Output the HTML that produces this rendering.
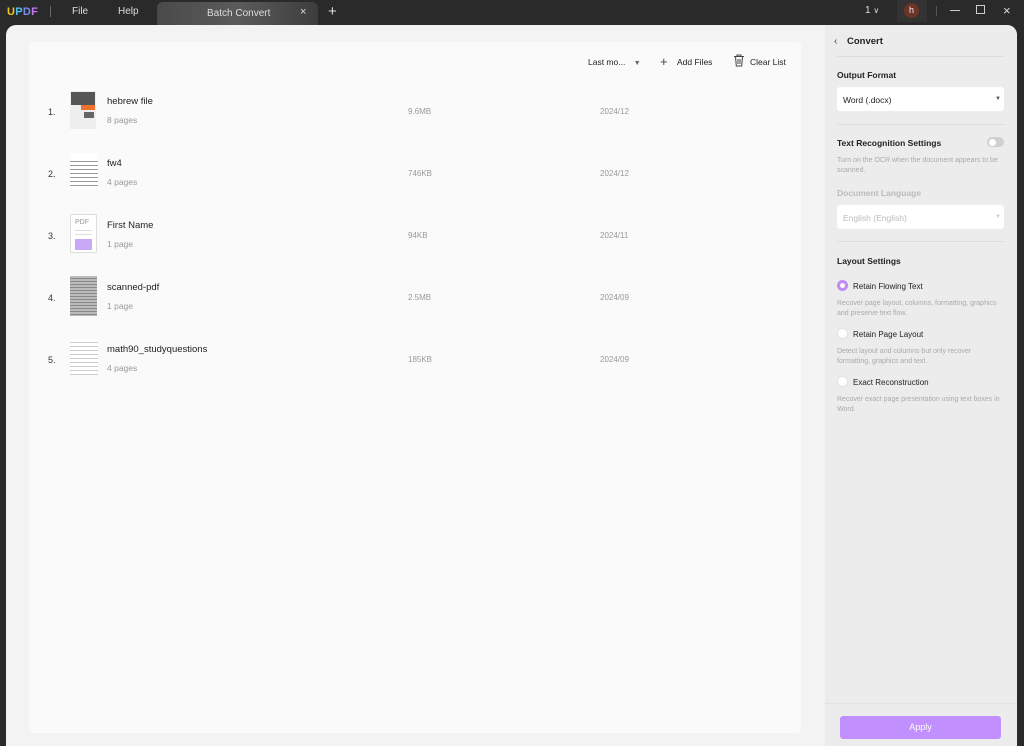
<!DOCTYPE html>
<html><head><meta charset="utf-8"><style>
*{margin:0;padding:0;box-sizing:border-box}
body{width:1024px;height:746px;background:#2a2a2a;font-family:"Liberation Sans",sans-serif;position:relative;overflow:hidden}
.a{position:absolute}
.t{color:#ddd;font-size:10px}
.row .n{font-size:9px;color:#333}
.nm{font-size:9.5px;color:#222}
.sb{font-size:8.5px;color:#999}
.sz{font-size:8px;color:#999}
.p{font-size:8.5px;color:#222}
.d{font-size:7px;color:#aaa;line-height:9.5px}
.h{font-size:8.5px;font-weight:bold;color:#222}
.rd{width:11px;height:11px;border-radius:50%;background:#fff;border:1px solid #e2e2e2}
</style></head><body>
<div class="a" style="left:7px;top:6px;font-size:11px;font-weight:bold;letter-spacing:0.3px"><span style="color:#f5c518">U</span><span style="color:#4ec1f0">P</span><span style="color:#7a8cf5">D</span><span style="color:#c57af5">F</span></div>
<div class="a" style="left:50px;top:6px;width:1px;height:11px;background:#666"></div>
<div class="a t" style="left:72px;top:6px">File</div>
<div class="a t" style="left:118px;top:6px">Help</div>
<div class="a" style="left:157px;top:2px;width:161px;height:23px;background:linear-gradient(90deg,#4a4a4a,#5b5b5b 50%,#3d3d3d);border-radius:6px 6px 0 0"></div>
<div class="a t" style="left:207px;top:8px">Batch Convert</div>
<div class="a t" style="left:300px;top:6px;font-size:11px">×</div>
<div class="a t" style="left:328px;top:3px;font-size:15px">+</div>
<div class="a t" style="left:865px;top:5px">1 <span style="font-size:8px">∨</span></div>
<div class="a" style="left:897px;top:0;width:30px;height:22px;background:#333"></div>
<div class="a" style="left:904px;top:3px;width:15px;height:15px;border-radius:50%;background:#6a3427;color:#eee;font-size:9px;text-align:center;line-height:15px">h</div>
<div class="a" style="left:936px;top:6px;width:1px;height:10px;background:#555"></div>
<div class="a" style="left:950px;top:10px;width:10px;height:1px;background:#ccc"></div>
<div class="a" style="left:976px;top:5px;width:9px;height:9px;border:1px solid #ccc"></div>
<div class="a t" style="left:1003px;top:3px;font-size:13px">×</div>

<div class="a" style="left:6px;top:25px;width:1011px;height:721px;background:#f3f3f3;border-radius:10px 10px 0 0"></div>
<div class="a" style="left:29px;top:42px;width:772px;height:691px;background:#fafafa;border-radius:4px"></div>
<div class="a p" style="left:588px;top:57px">Last mo... <span style="font-size:7px;color:#666;margin-left:6px">▼</span></div>
<div class="a p" style="left:660px;top:54px;font-size:13px;color:#444">+</div>
<div class="a p" style="left:677px;top:57px">Add Files</div>
<svg class="a" style="left:733px;top:54px" width="12" height="13" viewBox="0 0 12 13"><path d="M1 2.5h10M4 2.5V1h4v1.5M2.5 2.5l.8 9.5h5.4l.8-9.5M5 5v5M7 5v5" stroke="#444" fill="none" stroke-width="1"/></svg>
<div class="a p" style="left:750px;top:57px">Clear List</div>

<div class="row">
<div class="a n" style="left:48px;top:107px">1.</div>
<div class="a" style="left:70px;top:91px;width:26px;height:38px;background:#eee"><div style="height:13px;background:#555;margin:1px 1px 0"></div><div style="height:5px;width:14px;margin-left:11px;background:#f07030"></div><div style="height:6px;width:10px;margin:2px 0 0 14px;background:#666"></div></div>
<div class="a nm" style="left:107px;top:96px">hebrew file</div><div class="a sb" style="left:107px;top:115px">8 pages</div>
<div class="a sz" style="left:408px;top:107px">9.6MB</div><div class="a sz" style="left:600px;top:107px">2024/12</div>

<div class="a n" style="left:48px;top:169px">2.</div>
<div class="a" style="left:70px;top:153px;width:28px;height:36px;background:#fff;border-top:5px solid #fff;background-image:repeating-linear-gradient(#fff 0 3px,#999 3px 4px)"></div>
<div class="a nm" style="left:107px;top:158px">fw4</div><div class="a sb" style="left:107px;top:177px">4 pages</div>
<div class="a sz" style="left:408px;top:169px">746KB</div><div class="a sz" style="left:600px;top:169px">2024/12</div>

<div class="a n" style="left:48px;top:231px">3.</div>
<div class="a" style="left:70px;top:214px;width:27px;height:39px;background:#fff;border:1px solid #ddd;border-radius:2px"><div style="font-size:7px;color:#999;margin:4px 0 0 4px">PDF</div><div style="height:1px;background:#ddd;margin:4px 4px 0"></div><div style="height:1px;background:#ddd;margin:3px 4px 0"></div><div style="height:11px;background:#c9a8f5;margin:4px 4px 0"></div></div>
<div class="a nm" style="left:107px;top:220px">First Name</div><div class="a sb" style="left:107px;top:239px">1 page</div>
<div class="a sz" style="left:408px;top:231px">94KB</div><div class="a sz" style="left:600px;top:231px">2024/11</div>

<div class="a n" style="left:48px;top:293px">4.</div>
<div class="a" style="left:70px;top:276px;width:27px;height:40px;background:#aaa;background-image:repeating-linear-gradient(#bbb 0 2px,#888 2px 3px)"></div>
<div class="a nm" style="left:107px;top:282px">scanned-pdf</div><div class="a sb" style="left:107px;top:301px">1 page</div>
<div class="a sz" style="left:408px;top:293px">2.5MB</div><div class="a sz" style="left:600px;top:293px">2024/09</div>

<div class="a n" style="left:48px;top:355px">5.</div>
<div class="a" style="left:70px;top:339px;width:28px;height:36px;background:#fff;background-image:repeating-linear-gradient(#fff 0 3px,#ccc 3px 4px)"></div>
<div class="a nm" style="left:107px;top:344px">math90_studyquestions</div><div class="a sb" style="left:107px;top:363px">4 pages</div>
<div class="a sz" style="left:408px;top:355px">185KB</div><div class="a sz" style="left:600px;top:355px">2024/09</div>
</div>

<div class="a" style="left:825px;top:25px;width:192px;height:721px;background:#ececec;border-radius:0 10px 0 0"></div>
<div class="a" style="left:834px;top:36px;font-size:10px;color:#444">‹</div>
<div class="a" style="left:847px;top:36px;font-size:9.5px;font-weight:bold;color:#222">Convert</div>
<div class="a" style="left:837px;top:56px;width:167px;height:1px;background:#ddd"></div>
<div class="a h" style="left:837px;top:70px">Output Format</div>
<div class="a" style="left:837px;top:87px;width:167px;height:24px;background:#fff;border-radius:3px"></div>
<div class="a p" style="left:843px;top:95px">Word (.docx)</div>
<div class="a" style="left:995px;top:96px;font-size:6px;color:#555">▼</div>
<div class="a" style="left:837px;top:124px;width:167px;height:1px;background:#ddd"></div>
<div class="a h" style="left:837px;top:138px">Text Recognition Settings</div>
<div class="a" style="left:987px;top:137px;width:17px;height:10px;border-radius:5px;background:#d0d0d0"><div style="width:7px;height:7px;border-radius:50%;background:#fff;margin:1.5px"></div></div>
<div class="a d" style="left:837px;top:156px;width:168px">Turn on the OCR when the document appears to be scanned.</div>
<div class="a h" style="left:837px;top:188px;color:#bbb">Document Language</div>
<div class="a" style="left:837px;top:205px;width:167px;height:24px;background:#fff;border-radius:3px"></div>
<div class="a p" style="left:843px;top:213px;color:#bbb">English (English)</div>
<div class="a" style="left:995px;top:214px;font-size:6px;color:#ccc">▼</div>
<div class="a" style="left:837px;top:241px;width:167px;height:1px;background:#ddd"></div>
<div class="a h" style="left:837px;top:256px">Layout Settings</div>
<div class="a rd" style="left:837px;top:280px;border:3px solid #c08af5"></div>
<div class="a p" style="left:853px;top:282px;font-size:8px">Retain Flowing Text</div>
<div class="a d" style="left:837px;top:299px;width:172px">Recover page layout, columns, formatting, graphics and preserve text flow.</div>
<div class="a rd" style="left:837px;top:328px"></div>
<div class="a p" style="left:853px;top:330px;font-size:8px">Retain Page Layout</div>
<div class="a d" style="left:837px;top:347px;width:160px">Detect layout and columns but only recover formatting, graphics and text.</div>
<div class="a rd" style="left:837px;top:376px"></div>
<div class="a p" style="left:853px;top:378px;font-size:8px">Exact Reconstruction</div>
<div class="a d" style="left:837px;top:395px;width:165px">Recover exact page presentation using text boxes in Word.</div>
<div class="a" style="left:825px;top:703px;width:192px;height:1px;background:#e2e2e2"></div>
<div class="a" style="left:840px;top:716px;width:161px;height:23px;background:#c190fe;border-radius:3px;color:#fff;font-size:9px;text-align:center;line-height:23px">Apply</div>
</body></html>
